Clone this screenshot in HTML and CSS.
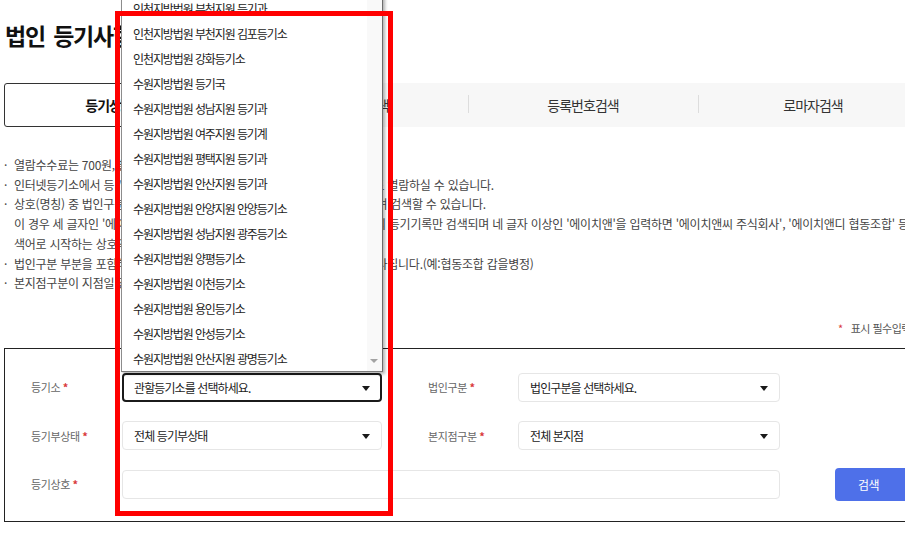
FILE: index.html
```html
<!DOCTYPE html>
<html lang="ko">
<head>
<meta charset="utf-8">
<title>법인 등기사항 열람</title>
<link rel="stylesheet" href="styles.css">
</head>
<body>
<div class="page">
  <h1 class="title">법인 등기사항 열람/발급</h1>

  <div class="tabs">
    <div class="tab active">등기상호검색</div>
    <div class="tab">법인번호검색</div>
    <div class="tab sep">등록번호검색</div>
    <div class="tab sep">로마자검색</div>
  </div>

  <ul class="notes">
    <li>열람수수료는 700원, 발급수수료는 1,000원입니다.</li>
    <li>인터넷등기소에서 등기사항증명서를 발급받은 경우 3개월 이내에는 무료로도 열람하실 수 있습니다.</li>
    <li>상호(명칭) 중 법인구분 부분을 제외한 나머지 부분의 세 글자 이상을 입력하여 검색할 수 있습니다.</li>
    <li class="cont">이 경우 세 글자인 '에이치'를 입력하면 상호(명칭)가 정확히 '에이치'인 법인의 등기기록만 검색되며 네 글자 이상인 '에이치앤'을 입력하면 '에이치앤씨 주식회사', '에이치앤디 협동조합' 등 검</li>
    <li class="cont">색어로 시작하는 상호의 등기기록이 모두 검색됩니다.</li>
    <li>법인구분 부분을 포함하여 검색할 경우 법인구분에 따라 검색되는 결과가 달라집니다.(예:협동조합 갑을병정)</li>
    <li>본지점구분이 지점일 경우 지점의 상호로 검색됩니다.</li>
  </ul>

  <div class="required"><span class="star">*</span><span class="req-text">표시 필수입력 항목입니다.</span></div>

  <div class="form">
    <div class="grid">
      <div class="label">등기소 <span class="star">*</span></div>
      <div class="select focus"><span>관할등기소를 선택하세요.</span><i class="arrow"></i></div>
      <div class="label label2">법인구분 <span class="star">*</span></div>
      <div class="select"><span>법인구분을 선택하세요.</span><i class="arrow"></i></div>
      <div></div>
      <div></div>

      <div class="label">등기부상태 <span class="star">*</span></div>
      <div class="select"><span>전체 등기부상태</span><i class="arrow"></i></div>
      <div class="label label2">본지점구분 <span class="star">*</span></div>
      <div class="select"><span>전체 본지점</span><i class="arrow"></i></div>
      <div></div>
      <div></div>

      <div class="label">등기상호 <span class="star">*</span></div>
      <div class="input"></div>
      <div></div>
      <button class="btn">검색</button>
    </div>
  </div>

  <div class="listbox">
    <ul class="options">
      <li>인천지방법원 부천지원 등기과</li>
      <li>인천지방법원 부천지원 김포등기소</li>
      <li>인천지방법원 강화등기소</li>
      <li>수원지방법원 등기국</li>
      <li>수원지방법원 성남지원 등기과</li>
      <li>수원지방법원 여주지원 등기계</li>
      <li>수원지방법원 평택지원 등기과</li>
      <li>수원지방법원 안산지원 등기과</li>
      <li>수원지방법원 안양지원 안양등기소</li>
      <li>수원지방법원 성남지원 광주등기소</li>
      <li>수원지방법원 양평등기소</li>
      <li>수원지방법원 이천등기소</li>
      <li>수원지방법원 용인등기소</li>
      <li>수원지방법원 안성등기소</li>
      <li>수원지방법원 안산지원 광명등기소</li>
    </ul>
    <div class="scrollbar"><i class="sarrow"></i></div>
  </div>

  <div class="highlight"></div>
</div>
</body>
</html>
```

FILE: styles.css
```css
html, body {
  margin: 0;
  padding: 0;
  background: #fff;
  overflow: hidden;
}
body {
  font-family: "Noto Sans CJK KR", "Noto Sans", sans-serif;
  color: #333;
}
.page {
  position: relative;
  width: 1100px;
  padding-top: 21px;
}
.title {
  margin: 0 0 34px 5px;
  font-size: 23px;
  line-height: 28px;
  font-weight: 700;
  letter-spacing: -1.2px;
  word-spacing: 3px;
  color: #111;
}
.tabs {
  margin-left: 4px;
  display: flex;
  height: 44px;
  background: #f7f7f7;
}
.tab {
  position: relative;
  width: 230px;
  box-sizing: border-box;
  display: flex;
  align-items: center;
  justify-content: center;
  font-size: 14px;
  letter-spacing: -1px;
  color: #333;
}
.tab.active {
  width: 234px;
  background: #fff;
  border: 1px solid #333;
  border-radius: 3px;
  font-weight: 700;
  color: #111;
}
.tab.sep::before {
  content: "";
  position: absolute;
  left: 0;
  top: 12px;
  height: 18px;
  width: 1px;
  background: #ddd;
}
.notes {
  list-style: none;
  margin: 28px 0 0;
  padding: 0;
  font-size: 12px;
  line-height: 19.7px;
  letter-spacing: -0.25px;
  color: #444;
  white-space: nowrap;
}
.notes li {
  padding-left: 14px;
  position: relative;
}
.notes li::before {
  content: "·";
  position: absolute;
  left: 4px;
}
.notes li.cont::before {
  content: "";
}
.required {
  margin-top: 26px;
  padding-left: 838px;
  font-size: 11px;
  line-height: 18px;
  letter-spacing: -0.5px;
  color: #555;
  white-space: nowrap;
}
.req-text {
  margin-left: 8px;
}
.star {
  color: #d9393b;
}
.form {
  margin: 11px 0 0 4px;
  border: 1px solid #222;
  padding: 24px 0 22px 26px;
}
.grid {
  display: grid;
  grid-template-columns: 91px 260px 136px 262px 55px 90px;
  grid-template-rows: 29px 29px 29px;
  row-gap: 19.5px;
  align-items: center;
}
.label {
  font-size: 11px;
  letter-spacing: -0.4px;
  color: #666;
}
.label .star {
  font-size: 11px;
  font-weight: 700;
}
.label2 {
  padding-left: 46px;
}
.select, .input {
  position: relative;
  box-sizing: border-box;
  height: 29px;
  border: 1px solid #e6e6e6;
  border-radius: 4px;
  background: #fff;
  display: flex;
  align-items: center;
  padding-left: 11px;
  font-size: 12px;
  letter-spacing: -0.9px;
  color: #222;
}
.select.focus {
  border: 2px solid #1b1b1b;
  padding-left: 10px;
}
.input {
  grid-column: 2 / span 3;
}
.arrow {
  position: absolute;
  right: 11px;
  top: 12px;
  width: 0;
  height: 0;
  border-left: 4px solid transparent;
  border-right: 4px solid transparent;
  border-top: 5px solid #1a1a1a;
}
.select.focus .arrow {
  right: 10px;
  top: 11px;
}
.btn {
  grid-column: 6;
  height: 33px;
  border: 0;
  border-radius: 4px;
  background: #4e70e9;
  color: #fff;
  font-family: inherit;
  font-size: 12px;
  letter-spacing: -0.5px;
  padding: 0 0 0 23px;
  text-align: left;
}
.listbox {
  position: absolute;
  left: 121px;
  top: -5px;
  width: 262px;
  height: 377px;
  box-sizing: border-box;
  border: 1px solid #8c8c8c;
  border-right-color: #6d6d6d;
  border-bottom-color: #7a7a7a;
  background: #fff;
  box-shadow: 2px 2px 3px rgba(0, 0, 0, 0.3);
  display: flex;
}
.options {
  list-style: none;
  margin: 0;
  padding: 0;
  flex: 1;
  font-size: 12px;
  letter-spacing: -1.1px;
  color: #222;
}
.options li {
  height: 25px;
  line-height: 25px;
  padding-left: 11px;
  white-space: nowrap;
}
.scrollbar {
  position: relative;
  width: 15px;
  background: #f9f9f9;
}
.sarrow {
  position: absolute;
  left: 3px;
  bottom: 8px;
  width: 0;
  height: 0;
  border-left: 4.5px solid transparent;
  border-right: 4.5px solid transparent;
  border-top: 4px solid #a3a3a3;
}
.highlight {
  position: absolute;
  left: 115px;
  top: 11px;
  width: 278px;
  height: 505px;
  box-sizing: border-box;
  border: 5px solid #ff0000;
}
```
